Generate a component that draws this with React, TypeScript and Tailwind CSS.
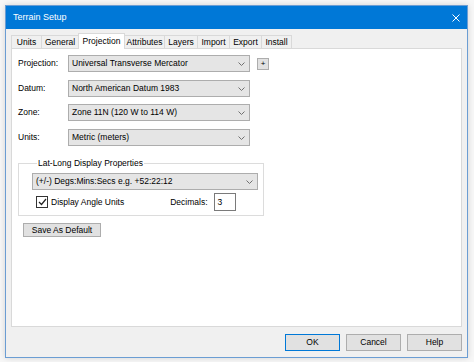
import React from 'react'

const tabs = [
  { name: 'Units', w: 'w-[31px]' },
  { name: 'General', w: 'w-[38px]' },
  { name: 'Projection', w: 'w-[47px]' },
  { name: 'Attributes', w: 'w-[41px]' },
  { name: 'Layers', w: 'w-[34px]' },
  { name: 'Import', w: 'w-[33px]' },
  { name: 'Export', w: 'w-[33px]' },
  { name: 'Install', w: 'w-[31px]' },
]

function Chevron() {
  return (
    <svg width="7" height="4" viewBox="0 0 7 4" className="shrink-0">
      <path d="M0.5 0.5 L3.5 3.5 L6.5 0.5" fill="none" stroke="#707070" strokeWidth="1" />
    </svg>
  )
}

function Select({ value, className = '' }: { value: string; className?: string }) {
  return (
    <div
      className={`flex h-[17px] items-center justify-between border border-[#adadad] bg-[#e5e5e5] pl-[3px] pr-[4px] ${className}`}
    >
      <span>{value}</span>
      <Chevron />
    </div>
  )
}

function Row({ label, value, children }: { label: string; value: string; children?: React.ReactNode }) {
  return (
    <div className="flex items-center">
      <div className="w-[50px]">{label}</div>
      <Select value={value} className="w-[182px]" />
      {children}
    </div>
  )
}

function Btn({ label, focused = false }: { label: string; focused?: boolean }) {
  return (
    <div
      className={`flex h-[17px] w-[55px] items-center justify-center border bg-[#e1e1e1] ${
        focused ? 'border-[#0078d7]' : 'border-[#adadad]'
      }`}
    >
      {label}
    </div>
  )
}

export default function App() {
  return (
    <div className="h-[362px] w-[474px] bg-[#f7f7f7] pl-[5px] pt-[5px] font-['Liberation_Sans',Arial,sans-serif] text-[8.5px] leading-none text-black">
      <div className="flex w-[463px] flex-col border border-[#6b9dd3] bg-[#f0f0f0] shadow-[0_0_6px_rgba(0,0,0,0.15)]">
        {/* title bar */}
        <div className="flex h-[23px] items-center justify-between bg-[#0078d7] pl-[7px] pr-[7px] text-[9px] text-white">
          <span>Terrain Setup</span>
          <svg width="8" height="8" viewBox="0 0 8 8">
            <path d="M0.5 0.5 L7.5 7.5 M7.5 0.5 L0.5 7.5" stroke="#ffffff" strokeWidth="1" />
          </svg>
        </div>

        <div className="px-[5px] pb-[6px] pt-[4px]">
          {/* tabs */}
          <div className="flex h-[15px] items-end pl-[1px]">
            {tabs.map((t) =>
              t.name === 'Projection' ? (
                <div
                  key={t.name}
                  className={`relative z-10 -mb-px -ml-px flex h-[16px] items-center justify-center border border-b-0 border-[#d9d9d9] bg-white pb-[1px] ${t.w}`}
                >
                  {t.name}
                </div>
              ) : (
                <div
                  key={t.name}
                  className={`-ml-px flex h-[13px] items-center justify-center border border-b-0 border-[#d9d9d9] bg-[#f0f0f0] pt-[1px] ${t.w}`}
                >
                  {t.name}
                </div>
              )
            )}
          </div>

          {/* panel */}
          <div className="flex h-[279px] flex-col border border-[#d9d9d9] bg-white pl-[6px] pt-[6px]">
            <Row label="Projection:" value="Universal Transverse Mercator">
              <div className="ml-[7px] flex h-[12px] w-[12px] items-center justify-center border border-[#adadad] bg-[#e1e1e1] text-[8px]">
                +
              </div>
            </Row>
            <div className="mt-[8px]">
              <Row label="Datum:" value="North American Datum 1983" />
            </div>
            <div className="mt-[7px]">
              <Row label="Zone:" value="Zone 11N (120 W to 114 W)" />
            </div>
            <div className="mt-[8px]">
              <Row label="Units:" value="Metric (meters)" />
            </div>

            {/* group box */}
            <fieldset className="mt-[12px] h-[58px] w-[246px] border border-[#dcdcdc] pl-[13px] pr-[5px]">
              <legend className="ml-[5px] px-[1px] leading-[11px]">Lat-Long Display Properties</legend>
              <Select value="(+/-) Degs:Mins:Secs e.g. +52:22:12" className="mt-[4px] h-[16px]" />
              <div className="mt-[3px] flex items-center">
                <div className="ml-[4px] flex h-[12px] w-[12px] items-center justify-center border border-[#333333] bg-white">
                  <svg width="9" height="8" viewBox="0 0 9 8">
                    <path d="M1 4 L3.5 6.5 L8 1" fill="none" stroke="#222222" strokeWidth="1.2" />
                  </svg>
                </div>
                <span className="ml-[3px]">Display Angle Units</span>
                <span className="ml-[46px]">Decimals:</span>
                <div className="ml-[6px] flex h-[18px] w-[22px] items-center border border-[#7a7a7a] bg-white pl-[3px]">
                  3
                </div>
              </div>
            </fieldset>

            <div className="ml-[5px] mt-[7px] flex h-[14px] w-[78px] items-center justify-center border border-[#adadad] bg-[#e1e1e1]">
              Save As Default
            </div>
          </div>

          {/* buttons */}
          <div className="mt-[7px] flex justify-end gap-[6px]">
            <Btn label="OK" focused />
            <Btn label="Cancel" />
            <Btn label="Help" />
          </div>
        </div>
      </div>
    </div>
  )
}
